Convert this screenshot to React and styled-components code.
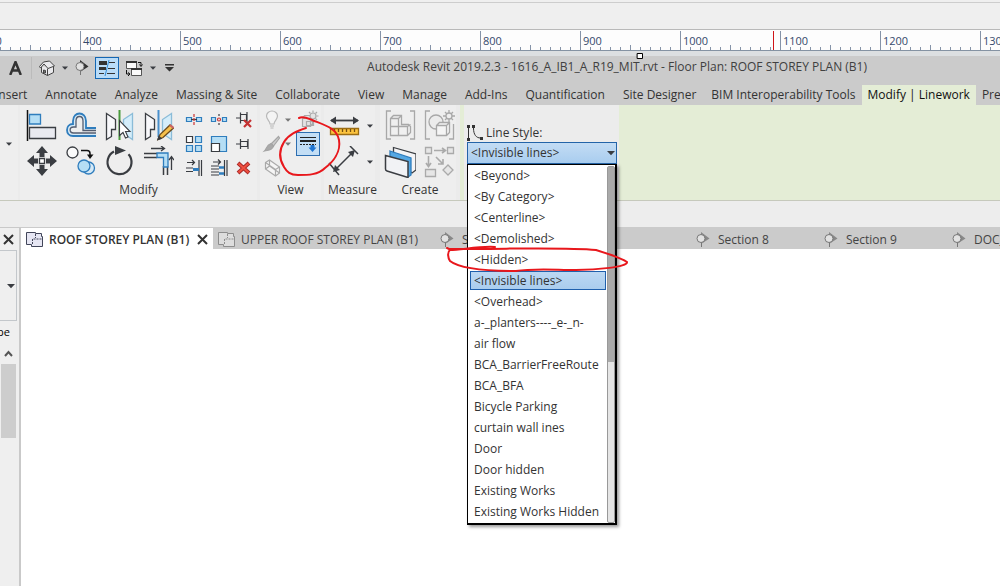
import React, { useState } from 'react';
import styled, { createGlobalStyle } from 'styled-components';

const GlobalStyle = createGlobalStyle`
    * {
        box-sizing: border-box;
    }

    body {
        margin: 0;
        background-color: #fff;
        color: #333;
        font-family: "Open Sans", "Noto Sans", sans-serif;
        font-size: 12px;
        line-height: 16px;
        overflow: hidden;
    }

    button, select {
        font: inherit;
        color: inherit;
    }

    button {
        display: flex;
        align-items: center;
        justify-content: center;
        border: none;
        padding: 0;
        background: none;
        white-space: nowrap;
        flex-shrink: 0;
    }

    svg {
        display: block;
        flex-shrink: 0;
    }
`;

const Page = styled.div`
    position: relative;
    display: flex;
    flex-direction: column;
    min-height: 100vh;
    overflow: hidden;
`;

const TopStrip = styled.div`
    height: 30px;
    padding-top: 2px;
    background-color: #efefef;
    border-bottom: 1px solid #b9b9b9;

    &::before {
        content: "";
        display: block;
        height: 1px;
        background-color: #cdcdcd;
    }
`;

const RulerBar = styled.div`
    height: 26px;
    background-color: #dcdfe1;
    overflow: hidden;
`;

const RulerSvg = styled.svg`
    width: 100%;
    height: 21px;
    background-color: #fdfdfd;
    border-bottom: 1px solid #8593a3;

    text {
        fill: #35496b;
        font-size: 11px;
    }
`;

const TitleBar = styled.div`
    display: flex;
    align-items: center;
    height: 28px;
    padding: 0 133px 4px 0;
    background-color: #cbcbcb;
`;

const QuickAccess = styled.div`
    display: flex;
    align-items: center;
    flex: 1;
`;

const QuickButton = styled.button`
    width: ${({ $width }) => $width}px;
    height: 24px;
    ${({ $active }) => $active && `
        height: 22px;
        background-color: #b9dcf8;
        outline: 1px solid #1467b3;
        outline-offset: -1px;
    `}
`;

const Separator = styled.span`
    width: 1px;
    height: 22px;
    background-color: #bbb;
`;

const WindowTitle = styled.span`
    padding-bottom: 3px;
    color: #404040;
    white-space: nowrap;
`;

const TabBar = styled.nav`
    display: flex;
    height: 21px;
    background-color: #cbcbcb;
    overflow: hidden;
`;

const TabList = styled.div`
    display: flex;
    margin-left: -14px;
`;

const RibbonTab = styled.button`
    padding: 0 ${({ $tight }) => ($tight ? 6 : 9)}px;
    height: 20px;
    margin-top: 1px;
    background-color: ${({ $active }) => ($active ? '#e4edd6' : 'transparent')};
    color: ${({ $active }) => ($active ? '#111' : '#333')};
`;

const Ribbon = styled.div`
    display: flex;
    height: 96px;
    background-color: #e4edd6;
    border-bottom: 1px solid #c6c9bc;
`;

const Panel = styled.section`
    display: flex;
    flex-direction: column;
    width: ${({ $width }) => $width}px;
    padding: 3px 0 0 ${({ $left }) => $left || 0}px;
    background-color: #eee;
    border-right: ${({ $gap }) => $gap || 0}px solid #ebebeb;
`;

const PanelBody = styled.div`
    display: flex;
    align-items: center;
    height: 72px;
`;

const PanelLabel = styled.div`
    padding-top: 2px;
    text-align: center;
`;

const LargeGrid = styled.div`
    display: grid;
    grid-template-columns: ${({ $cols }) => $cols};
    gap: 4px 7px;
    margin: 0 7px 0 ${({ $left }) => $left || 0}px;
    align-items: center;
`;

const SmallGrid = styled.div`
    display: grid;
    grid-template-columns: ${({ $cols }) => $cols};
    grid-auto-rows: 24px;
    justify-items: center;
    align-items: center;
`;

const ToolButton = styled.button`
    width: ${({ $size }) => $size || 24}px;
    height: ${({ $size }) => $size || 24}px;
    ${({ $active }) => $active && `
        background-color: #c3def5;
        outline: 1px solid #2c6db0;
        outline-offset: -1px;
    `}
`;

const StylePanel = styled.section`
    position: relative;
    width: 155px;
    margin-left: 4px;
    padding: 18px 2px 0 3px;
    background-color: #ececec;
`;

const StyleLabel = styled.label`
    display: flex;
    align-items: center;
    gap: 3px;
    height: 19px;
`;

const SelectBox = styled.div`
    position: relative;
    display: flex;
    align-items: center;
    justify-content: flex-end;
    height: 22px;

    svg {
        position: absolute;
        right: 2px;
        pointer-events: none;
    }
`;

const StyleSelect = styled.select`
    width: 100%;
    height: 22px;
    padding: 0 0 0 3px;
    appearance: none;
    border: 1px solid #2464a8;
    border-radius: 0;
    outline: none;
    background: linear-gradient(#c3dcf4, #a9cdef);
`;

const DropList = styled.div`
    position: absolute;
    z-index: 2;
    top: 59px;
    left: 3px;
    right: 2px;
    display: flex;
    border: 1px solid #000;
    border-right-width: 2px;
    border-bottom-width: 2px;
    background-color: #fff;
    box-shadow: 2px 2px 3px rgba(0, 0, 0, 0.4);
`;

const Options = styled.div`
    flex: 1;
    padding: 1px 0 0 2px;
`;

const Option = styled.button`
    width: 100%;
    height: 19px;
    margin: 0 0 2px;
    padding-left: 3px;
    justify-content: flex-start;
    border: 1px solid ${({ $selected }) => ($selected ? '#1f60ad' : 'transparent')};
    background: ${({ $selected }) => ($selected ? 'linear-gradient(#bcd8f3, #aacdee)' : 'none')};
`;

const ListTrack = styled.div`
    width: 8px;
    margin: 1px 0 0 1px;
    border: 1px solid #999;
    border-radius: 2px;
    background-color: #e5e5e5;
`;

const ListThumb = styled.div`
    height: 195px;
    background-color: #aaa;
`;

const OptionsBar = styled.div`
    height: 26px;
    background-color: #ededed;
`;

const Workspace = styled.div`
    display: flex;
    flex: 1;
`;

const SidePanel = styled.aside`
    width: 21px;
    background-color: #efefef;
    border-right: 2px solid #c9c9c9;
    border-top: 1px solid #c9c9c9;
    overflow: hidden;
`;

const CloseButton = styled.button`
    width: 17px;
    height: 22px;
`;

const TypeBox = styled.div`
    display: flex;
    justify-content: flex-end;
    align-items: center;
    width: 17px;
    height: 71px;
    border: solid #c3c7cb;
    border-width: 1px 1px 1px 0;
    padding-right: 1px;
`;

const TypeLabel = styled.div`
    display: flex;
    justify-content: flex-end;
    width: 10px;
    padding: 3px 0 2px;
    font-size: 11px;
    color: #000;
    white-space: nowrap;
`;

const SideScroll = styled.div`
    width: 15px;
    height: 240px;
    margin-left: 1px;

    div {
        height: 74px;
        background-color: #cdcdcd;
    }
`;

const Canvas = styled.main`
    flex: 1;
    min-width: 0;
    background-color: #fff;
`;

const ViewTabs = styled.div`
    display: flex;
    height: 22px;
    background-color: #cbcbcb;
    overflow: hidden;
`;

const ViewTab = styled.div`
    display: flex;
    align-items: center;
    flex-shrink: 0;
    width: ${({ $width }) => $width}px;
    padding-left: ${({ $plan }) => ($plan ? 5 : 4)}px;
    background-color: ${({ $active }) => ($active ? '#fff' : 'transparent')};
    border-top: 1px solid #cbcbcb;

    button {
        gap: ${({ $plan }) => ($plan ? 6 : 8)}px;
        height: 21px;
        padding-top: 2px;
        font-weight: ${({ $active }) => ($active ? 600 : 400)};
        color: ${({ $active }) => ($active ? '#333' : '#444')};
    }

    button:last-child:not(:first-child) {
        margin-left: 8px;
    }
`;

const Markup = styled.svg`
    position: absolute;
    z-index: 3;
    top: 0;
    left: 0;
    pointer-events: none;
`;

const INK = '#3a3d42';
const BLUE = '#2f7dbd';
const SKY = '#b5def5';

const Caret = ({ size = 6, color = INK }) => (
    <svg width={size} height={size} viewBox="0 0 6 6"><path d="M0 1.5h6L3 4.7z" fill={color} /></svg>
);

const Cross = () => (
    <svg width="11" height="11" viewBox="0 0 11 11"><path d="M1 1l9 9M10 1l-9 9" stroke="#333" strokeWidth="2" /></svg>
);

const Large = ({ children }) => (
    <svg width="32" height="32" viewBox="0 0 32 32" fill="none" stroke={INK} strokeWidth="1.3">{children}</svg>
);

const Small = ({ children }) => (
    <svg width="24" height="24" viewBox="0 0 24 24" fill="none" stroke={INK} strokeWidth="1.2">{children}</svg>
);

const MirrorHalves = () => (
    <>
        <path d="M3.5 3.5l9 6v10h-4v7l-5 3z" fill="#f8f8fb" />
        <path d="M29.5 3.5l-9 6v14l9 6z" fill="#d4edfa" stroke="#8bbcd8" />
    </>
);

const modifyTools = [
    ['Align', <Large>
        <path d="M2.5 0v31" stroke="#111" strokeWidth="1.5" />
        <path d="M4.5 4.5h11v9.5h-11z" fill={SKY} stroke={BLUE} />
        <path d="M4.5 17.5h26v11h-26z" fill="#e9eaf0" />
    </Large>],
    ['Offset', <Large>
        <path d="M32 26H9C1 26 1 14 9 14V11C9 1 22 1 22 11V18H32" fill="#d5e9f6" stroke={BLUE} strokeWidth="1.8" />
        <path d="M32 23H9.5C5 23 5 17 9.5 17H12V11C12 5 19 5 19 11V20.5H32" fill="#eee" stroke="#555e70" />
    </Large>],
    ['Mirror - Pick Axis', <Large>
        <MirrorHalves />
        <path d="M16.5 0v30" stroke="#4a9b3c" strokeWidth="2" />
        <path d="M16.5 10.5v15l3.5-3 2.5 5.5 2.5-1-2.5-5.5h4.5z" fill="#fff" strokeWidth="1.1" />
    </Large>],
    ['Mirror - Draw Axis', <Large>
        <MirrorHalves />
        <path d="M16.5 0v27" stroke="#4a90cc" strokeWidth="2" />
        <path d="M16 29.5l2-5L28 15l3.5 3L21 27.5z" fill="#f6c04c" stroke="#6b4a1c" />
        <path d="M16 29.5l1-3 2 2z" fill="#222" />
        <path d="M28 15l3.5 3" stroke="#c66" strokeWidth="2" />
    </Large>],
    ['Move', <Large>
        <path d="M17 0l6 7h-3.5v4h-5V7H11zM17 30l6-7h-3.5v-4h-5v4H11zM2 15l7-6v3.5h4v5H9V21zM32 15l-7-6v3.5h-4v5h4V21z" fill={INK} stroke="none" />
        <path d="M14.5 12.5h5v5h-5z" fill="#fff" />
    </Large>],
    ['Copy', <Large>
        <circle cx="8.5" cy="6.5" r="5.5" fill="#fafafa" />
        <path d="M17 4.5h6q3 0 3 3v3" stroke="#111" strokeWidth="1.5" />
        <path d="M23 8.5h6.5L26 13z" fill="#111" stroke="none" />
        <circle cx="24.5" cy="22" r="6" fill="#d5e9f6" stroke={BLUE} />
        <circle cx="20" cy="20" r="6" fill={SKY} stroke={BLUE} />
    </Large>],
    ['Rotate', <Large>
        <path d="M25.5 8.2A12 12 0 1 1 11 5.5" strokeWidth="2.2" />
        <path d="M12 0l11 4.5L12 9z" fill={INK} stroke="none" />
    </Large>],
    ['Trim', <Large>
        <path d="M2 7.5h13M2 11.5h13M21.5 20v9M25.5 20v9" strokeWidth="1.5" />
        <path d="M15 7h11v14h-4.5v-9.5H15z" fill={SKY} stroke={BLUE} />
        <path d="M9 2.5h13M19 0l3.5 2.5L19 5M29.5 24V11M27 14l2.5-3.5L32 14" />
    </Large>],
];

const editTools = [
    ['Split Element', <Small>
        <path d="M4.5 9.5h5v4h-5zM14.5 9.5h5v4h-5z" fill={SKY} stroke={BLUE} />
        <path d="M9 11.5h6" /><path d="M12 6v12" stroke="#c33" strokeDasharray="3 1" />
    </Small>],
    ['Split with Gap', <Small>
        <path d="M4.5 9.5h4v4h-4zM15.5 9.5h4v4h-4z" fill={SKY} stroke={BLUE} />
        <path d="M12 6v2M12 15v2" /><circle cx="12" cy="11.5" r="1.5" stroke="#c33" />
    </Small>],
    ['Unpin', <Small>
        <path d="M4 10h4M8.5 4.5v11M8.5 6.5h6v6h-6M15 4v11" />
        <path d="M12 12l7 7M19 12l-7 7" stroke="#c43131" strokeWidth="2.2" />
    </Small>],
    ['Array', <Small>
        <path d="M4.5 4.5h6v6h-6z" fill="#fff" />
        <path d="M13.5 4.5h6v6h-6zM4.5 13.5h6v6h-6zM13.5 13.5h6v6h-6z" fill={SKY} stroke={BLUE} />
    </Small>],
    ['Scale', <Small>
        <path d="M4.5 4.5h15v15h-15z" fill={SKY} stroke={BLUE} /><path d="M4.5 11.5h8v8h-8z" fill="#fff" />
    </Small>],
    ['Pin', <Small><path d="M4 12h4M8.5 7v10M8.5 9.5h7v5h-7M16 7v10" /></Small>],
    ['Trim Single', <Small>
        <path d="M5 6.5h8M10 4l2.5 2.5L10 9M4 12h7M4 15.5h7M17 4v16M19.5 4v16" /><path d="M11 13.5h6" stroke={BLUE} strokeWidth="3" />
    </Small>],
    ['Trim Multiple', <Small>
        <path d="M6 6h7M11 3.5L13.5 6 11 8.5M4 10h8M4 13h8M4 16h8M4 19h8M17.5 4v16M20 4v16" /><path d="M12 11.5h5M12 17.5h5" stroke={BLUE} strokeWidth="2.5" />
    </Small>],
    ['Delete', <Small>
        <path d="M6 7l11 10M17 7L6 17" stroke="#a92a2a" strokeWidth="4" /><path d="M6.5 7.5l10 9M16.5 7.5l-10 9" stroke="#f0503f" strokeWidth="2" />
    </Small>],
];

const Bulb = () => (
    <Small><g stroke="#b8b8b8"><path d="M10 16c0-3-3.5-4.5-3.5-8a5.5 5 0 0 1 11 0c0 3.5-3.5 5-3.5 8z" fill="#f4f4f4" /><path d="M10 18h4M10.5 20h3" /></g></Small>
);

const Brush = () => (
    <Small><g stroke="#a5a5a5"><path d="M18.5 4.5l-7 7 2 2.5 6-8z" fill="#ccc" /><path d="M11 11.5l2.5 3C11 19 8 18 4.5 19c2-2 2-6 6.5-7.5z" fill="#aaa" /></g></Small>
);

const Beam = () => (
    <Small><g stroke="#aaa" fill="#f5f5f5"><path d="M5.5 6.5l4-2.5 10 7v6l-4 3-10-7z" /><path d="M5.5 6.5l10 7v6M15.5 13.5l4-2.5M9.5 4v6l10 7M9.5 10l-4 3" fill="none" /></g></Small>
);

const HideIcon = () => (
    <Small><g stroke="#aaa" fill="#e3e3e3"><path d="M6.5 10.5h8v8h-8zM6.5 10.5l2-3h8v8l-2 3M10.5 13.5h7v4h-7z" /><circle cx="17" cy="8" r="3" /><path d="M17 2.5v2M21 4l-1.5 1.5M22.5 8h-2M21 12l-1.5-1.5M13 4l1.5 1.5" /></g></Small>
);

const Linework = () => (
    <Small>
        <path d="M4 5.5h16" stroke="#222" strokeWidth="1" /><path d="M4 9h16" stroke="#222" strokeWidth="2" />
        <path d="M4 12.5h16" stroke="#222" strokeDasharray="2 1" />
        <path d="M14.5 13h4v2.5h2L16.5 20l-4-4.5h2z" fill="#1d74d2" stroke="none" />
    </Small>
);

const MeasureLine = () => (
    <Large>
        <path d="M3 10.5h27" strokeWidth="1.8" /><path d="M2 10.5l6-4v8zM31 10.5l-6-4v8z" fill={INK} stroke="none" />
        <path d="M2.5 18.5h28v6h-28z" fill="#fdc43f" stroke="#9b6d15" />
        <path d="M6.5 19v3M10.5 19v3M14.5 19v3M18.5 19v3M22.5 19v3M26.5 19v3" stroke="#765010" />
    </Large>
);

const Dimension = () => (
    <Large>
        <path d="M7 24L25 6M1 17l10 12M22 0l8 8" strokeWidth="1.5" />
        <path d="M5 26l2-7 5 5zM27 4l-2 7-5-5z" fill={INK} stroke="none" />
    </Large>
);

const createTools = [
    ['Create Assembly', <Large><g stroke="#a8a8a8">
        <path d="M7 1H2.5v28H7M26 1h4.5v28H26" />
        <path d="M6.5 8.5l3-3h8v9h7l2 2v6l-3 3h-17zM6.5 8.5h8v8h9v9M14.5 8.5l3-3M14.5 16.5h-8M14.5 16.5v9M23.5 16.5l3-2" fill="#f0f0f0" />
    </g></Large>],
    ['Create Group', <Large><g stroke="#a8a8a8">
        <path d="M7 1H2.5v28H7M26 29h4.5V14" />
        <circle cx="13" cy="12" r="7" fill="#ececec" /><path d="M13.5 15.5l3-3h10v10l-3 3h-10zM13.5 15.5h10v10M23.5 15.5l3-3" fill="#f5f5f5" />
        <circle cx="26" cy="6" r="3" /><path d="M26 0v3M26 9v3M20 6h3M29 6h3M22 2l2 2M30 2l-2 2M22 10l2-2M30 10l-2-2" />
    </g></Large>],
    ['Create Parts', <Large>
        <path d="M9.5 1.5L32 8v16l-4 3L9.5 12z" fill="#f4f4f6" />
        <path d="M6 5l21 7v17l-3 2L6 20z" fill="#55a8e4" stroke={BLUE} />
        <path d="M1.5 9.5L24 15.5v16L3 25q-1.5-.5-1.5-2z" fill="#f1f2f5" strokeWidth="1.5" />
    </Large>],
    ['Create Similar', <Large><g stroke="#aaa">
        <path d="M2.5 1.5h6v6h-6zM24.5 1.5h6v6h-6zM2.5 23.5h10v7h-10zM25 19l5 5-5 5-5-5z" fill="#e6e6e6" />
        <path d="M11 4.5h11M19 2l3.5 2.5L19 7M5.5 10v10M3 17l2.5 3.5L8 17M13 11l7 7M20 13v5h-5" strokeWidth="1.6" />
    </g></Large>],
];

const PlanIcon = ({ dim }) => (
    <svg width="17" height="15" viewBox="0 0 17 15" fill="none" stroke={dim ? '#8d8d8d' : '#42465a'}>
        <path d="M.5.5h9v1h6v3h1v10h-11v-2h-5z" fill={dim ? '#ddd' : '#e6e6f3'} />
        <path d="M6.5 12V7h9M9.5 2v4" strokeDasharray="2 1" />
    </svg>
);

const SectionIcon = ({ dark }) => (
    <svg width="14" height="16" viewBox="0 0 14 16">
        <path d="M5 0l8.5 6.5L5 12z" fill={dark ? '#333' : '#888'} /><path d="M5.5 10v5" stroke="#777" />
        <circle cx="5" cy="6.5" r="4" fill="#e2e2e2" stroke="#777" />
    </svg>
);

const ribbonTabs = [
    { name: 'Insert' },
    { name: 'Annotate' },
    { name: 'Analyze' },
    { name: 'Massing & Site' },
    { name: 'Collaborate' },
    { name: 'View' },
    { name: 'Manage' },
    { name: 'Add-Ins' },
    { name: 'Quantification' },
    { name: 'Site Designer' },
    { name: 'BIM Interoperability Tools', tight: true },
    { name: 'Modify | Linework', tight: true, active: true },
    { name: 'Precast', tight: true },
];

const lineStyles = ['<Beyond>', '<By Category>', '<Centerline>', '<Demolished>', '<Hidden>', '<Invisible lines>', '<Overhead>', 'a-_planters----_e-_n-', 'air flow', 'BCA_BarrierFreeRoute', 'BCA_BFA', 'Bicycle Parking', 'curtain wall ines', 'Door', 'Door hidden', 'Existing Works', 'Existing Works Hidden'];

const viewTabs = [
    { name: 'UPPER ROOF STOREY PLAN (B1)', width: 223, plan: true },
    { name: 'S', width: 256 },
    { name: 'Section 8', width: 128 },
    { name: 'Section 9', width: 128 },
    { name: 'DOC_', width: 128 },
];

// one tick every 10 units, a longer one every 50, a label every 100
function Ruler() {
    const width = window.innerWidth;
    const ticks = Array.from({ length: Math.ceil(width / 10) }, (_, i) => i * 10);
    const labels = Array.from({ length: Math.ceil((width + 17) / 100) }, (_, i) => i);
    return (
        <RulerBar>
            <RulerSvg>
                {ticks.map((x) => {
                    const major = x % 100 === 80;
                    const top = major ? 1 : x % 50 === 30 ? 15 : 17;
                    return <path key={x} d={`M${x + 0.5} ${top}V20`} stroke="#8593a8" />;
                })}
                {labels.map((i) => (
                    <text key={i} x={i * 100 - 17} y="15">{i * 100 + 300}</text>
                ))}
                <rect x="773" y="1" width="1" height="20" fill="#d01418" />
            </RulerSvg>
        </RulerBar>
    );
}

function QuickAccessBar() {
    return (
        <QuickAccess>
            <QuickButton $width={31} aria-label="Text">
                <svg width="13" height="14" viewBox="0 0 13 14" fill="none" stroke="#333" strokeWidth="2.5"><path d="M1.2 14L6.5 1l5.3 13M3.5 9.5h6" /></svg>
            </QuickButton>
            <Separator />
            <QuickButton $width={29} aria-label="Default 3D View">
                <svg width="16" height="16" viewBox="0 0 16 16" fill="#e9e9ec" stroke="#444"><path d="M2.5 6.5v6l6 3 6-3v-6M8.5 8.5v7" /><path d="M.5 6.5L4.5 2l6-1 5 5-6.5 2.5L5 4 1.5 8z" /><path d="M4.5 10v3h2v-2.5z" fill="#777" /></svg>
            </QuickButton>
            <QuickButton $width={8} aria-label="3D View options"><Caret /></QuickButton>
            <QuickButton $width={26} aria-label="Section"><SectionIcon dark /></QuickButton>
            <QuickButton $width={24} $active aria-label="Thin Lines">
                <svg width="18" height="16" viewBox="0 0 18 16" stroke="#333" fill="none"><path d="M11 2.5h6" /><path d="M1 3h8" strokeWidth="4" /><path d="M1 8.5h7" strokeWidth="3" /><path d="M1 13.5h5M10 8.5h7M9 13.5h8" /><path d="M11 0L7 16" stroke="#348bd4" /></svg>
            </QuickButton>
            <QuickButton $width={30} aria-label="Switch Windows">
                <svg width="18" height="17" viewBox="0 0 18 17" fill="#fafafa" stroke="#555"><path d="M1.5 1.5h10v7h-10zM6.5 8.5h10v7h-10z" /><path d="M1 2h11M6 9h11" stroke="#333" strokeWidth="2" /><path d="M13 2.5h3v3M14.5 4.5l1.5 2 1.5-2M1.5 10v4h3M3 12.5L5 14l-2 2" fill="none" stroke="#111" /></svg>
            </QuickButton>
            <QuickButton $width={8} aria-label="Window options"><Caret /></QuickButton>
            <QuickButton $width={24} aria-label="Customize">
                <svg width="9" height="8" viewBox="0 0 9 8"><path d="M0 0h9v1.5H0zM0 3h9L4.5 7.5z" fill="#333" /></svg>
            </QuickButton>
        </QuickAccess>
    );
}

function LineStylePicker() {
    const [value, setValue] = useState('<Invisible lines>');
    return (
        <StylePanel>
            <StyleLabel htmlFor="line-style">
                <svg width="16" height="16" viewBox="0 0 16 16" fill="none" stroke="#333"><path d="M1.5 3v10M6.5 3c0 7 3 10 7 10" /><path d="M0 0h3v3H0zM0 13h3v3H0zM5 0h3v3H5zM13 12h3v3h-3z" fill="#333" stroke="none" /></svg>
                Line Style:
            </StyleLabel>
            <SelectBox>
                <StyleSelect id="line-style" value={value} onChange={(e) => setValue(e.target.value)}>
                    {lineStyles.map((style) => <option key={style}>{style}</option>)}
                </StyleSelect>
                <Caret size={8} />
            </SelectBox>
            <DropList>
                <Options role="listbox" aria-label="Line Style">
                    {lineStyles.map((style) => (
                        <Option key={style} role="option" aria-selected={style === value} $selected={style === value} onClick={() => setValue(style)}>
                            {style}
                        </Option>
                    ))}
                </Options>
                <ListTrack><ListThumb /></ListTrack>
            </DropList>
        </StylePanel>
    );
}

export default function App() {
    return (
        <Page>
            <GlobalStyle />
            <TopStrip />
            <Ruler />
            <TitleBar>
                <QuickAccessBar />
                <WindowTitle>Autodesk Revit 2019.2.3 - 1616_A_IB1_A_R19_MIT.rvt - Floor Plan: ROOF STOREY PLAN (B1)</WindowTitle>
            </TitleBar>
            <TabBar>
                <TabList>
                    {ribbonTabs.map(({ name, tight, active }) => (
                        <RibbonTab key={name} $tight={tight} $active={active}>{name}</RibbonTab>
                    ))}
                </TabList>
            </TabBar>
            <Ribbon>
                <Panel $width={20} $left={6} $gap={2}>
                    <PanelBody><Caret /></PanelBody>
                </Panel>
                <Panel $width={240} $gap={3}>
                    <PanelBody>
                        <LargeGrid $cols="repeat(4, 32px)" $left={5}>
                            {modifyTools.map(([name, icon]) => <ToolButton key={name} $size={32} aria-label={name}>{icon}</ToolButton>)}
                        </LargeGrid>
                        <SmallGrid $cols="repeat(3, 25px)">
                            {editTools.map(([name, icon]) => <ToolButton key={name} aria-label={name}>{icon}</ToolButton>)}
                        </SmallGrid>
                    </PanelBody>
                    <PanelLabel>Modify</PanelLabel>
                </Panel>
                <Panel $width={64} $gap={3}>
                    <PanelBody>
                        <SmallGrid $cols="24px 8px 32px">
                            <ToolButton aria-label="Hide in View"><Bulb /></ToolButton>
                            <Caret color="#777" />
                            <ToolButton aria-label="Displace Elements"><HideIcon /></ToolButton>
                            <ToolButton aria-label="Override Graphics"><Brush /></ToolButton>
                            <Caret color="#777" />
                            <ToolButton $active aria-label="Linework"><Linework /></ToolButton>
                            <ToolButton aria-label="Selection Box"><Beam /></ToolButton>
                        </SmallGrid>
                    </PanelBody>
                    <PanelLabel>View</PanelLabel>
                </Panel>
                <Panel $width={56} $left={4} $gap={5}>
                    <PanelBody>
                        <LargeGrid $cols="32px 6px">
                            <ToolButton $size={32} aria-label="Measure"><MeasureLine /></ToolButton>
                            <Caret />
                            <ToolButton $size={32} aria-label="Dimension"><Dimension /></ToolButton>
                            <Caret />
                        </LargeGrid>
                    </PanelBody>
                    <PanelLabel>Measure</PanelLabel>
                </Panel>
                <Panel $width={80} $left={4} $gap={4}>
                    <PanelBody>
                        <LargeGrid $cols="repeat(2, 32px)">
                            {createTools.map(([name, icon]) => <ToolButton key={name} $size={32} aria-label={name}>{icon}</ToolButton>)}
                        </LargeGrid>
                    </PanelBody>
                    <PanelLabel>Create</PanelLabel>
                </Panel>
                <LineStylePicker />
            </Ribbon>
            <OptionsBar />
            <Workspace>
                <SidePanel>
                    <CloseButton aria-label="Close palette"><Cross /></CloseButton>
                    <TypeBox><Caret size={8} /></TypeBox>
                    <TypeLabel>Edit Type</TypeLabel>
                    <CloseButton aria-label="Scroll up">
                        <svg width="9" height="7" viewBox="0 0 9 7"><path d="M1 6l3.5-4L8 6" stroke="#555" strokeWidth="2" fill="none" /></svg>
                    </CloseButton>
                    <SideScroll><div /></SideScroll>
                </SidePanel>
                <Canvas>
                    <ViewTabs>
                        <ViewTab $active $plan $width={192}>
                            <button><PlanIcon />ROOF STOREY PLAN (B1)</button>
                            <button aria-label="Close view"><Cross /></button>
                        </ViewTab>
                        {viewTabs.map(({ name, width, plan }) => (
                            <ViewTab key={name} $plan={plan} $width={width}>
                                <button>{plan ? <PlanIcon dim /> : <SectionIcon />}{name}</button>
                            </ViewTab>
                        ))}
                    </ViewTabs>
                </Canvas>
            </Workspace>
            <Markup width="660" height="290" fill="none" stroke="#e8171c" strokeWidth="2" strokeLinecap="round">
                <path d="M299 118c4-2 8 0 13 2 12 5 25 8 27 20 2 12-6 22-14 28-7 7-17 7-27 7-8 0-11-3-14-8-5-8-5-17 0-25 5-8 13-11 22-14" />
                <path d="M495 247c-16-1-34 3-45 3-3 2-2 8 0 11 10 8 40 10 66 10 18-3 40-1 60-1 20 0 52-3 51-8-6-4-18-8-31-12-30-3-80-1-147-1l-2-1" />
                <path d="M637.5 53.5h5v5h-5z" fill="#fff" stroke="#000" strokeWidth="1" />
            </Markup>
        </Page>
    );
}
